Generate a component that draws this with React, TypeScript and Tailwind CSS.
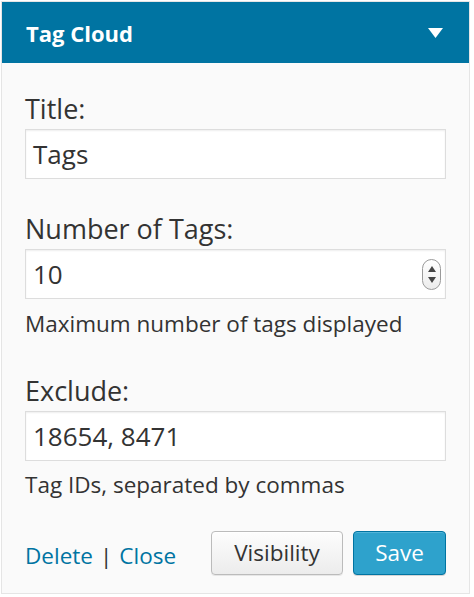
import React from "react";

const font = { fontFamily: '"Open Sans", "Noto Sans", Arial, sans-serif' };

function Field({
  label,
  value,
  spinner,
  className,
}: {
  label: string;
  value: string;
  spinner?: boolean;
  className?: string;
}) {
  return (
    <div className={className}>
      <label className="block text-[27px] leading-[36px] text-[#333]">{label}</label>
      <div className="mt-[2px] flex h-[50px] items-center border border-[#dddddd] bg-white pl-[7px] pr-[4px] shadow-[inset_0_1px_2px_rgba(0,0,0,0.07)]">
        <span className="flex-1 text-[26px] leading-[36px] text-[#333]">{value}</span>
        {spinner && <Spinner />}
      </div>
    </div>
  );
}

function Spinner() {
  return (
    <div className="flex h-[31px] w-[19px] flex-col items-center justify-center gap-[5px] rounded-full border border-[#9a9a9a] bg-gradient-to-b from-white to-[#ececec]">
      <svg width="8" height="6" viewBox="0 0 8 6">
        <path d="M4 0 L8 6 L0 6 Z" fill="#444" />
      </svg>
      <svg width="8" height="6" viewBox="0 0 8 6">
        <path d="M0 0 L8 0 L4 6 Z" fill="#444" />
      </svg>
    </div>
  );
}

export default function App() {
  return (
    <div className="min-h-[597px] bg-white" style={font}>
      <div className="ml-[1px] mt-[1px] w-[469px] border border-[#e5e5e5] bg-[#fafafa]">
        <div className="flex h-[61px] items-center justify-between bg-[#0074a2] pl-[24px] pr-[26px]">
          <h3 className="text-[22px] font-bold leading-[30px] text-white">Tag Cloud</h3>
          <svg width="15" height="10" viewBox="0 0 15 10">
            <path d="M0 0 L15 0 L7.5 10 Z" fill="#fff" />
          </svg>
        </div>
        <div className="px-[23px] pb-[18px] pt-[28px]">
          <Field label="Title:" value="Tags" />
          <Field className="mt-[32px]" label="Number of Tags:" value="10" spinner />
          <p className="mt-[10px] text-[22.5px] leading-[30px] text-[#333]">
            Maximum number of tags displayed
          </p>
          <Field className="mt-[34px]" label="Exclude:" value="18654, 8471" />
          <p className="mt-[9px] text-[22.5px] leading-[30px] text-[#333]">
            Tag IDs, separated by commas
          </p>
          <div className="mt-[31px] flex items-end">
            <div className="mb-[4px] flex-1 text-[22.5px] leading-[30px]">
              <a className="text-[#0074a2]" href="#">Delete</a>
              <span className="mx-[7px] text-[#333]">|</span>
              <a className="text-[#0074a2]" href="#">Close</a>
            </div>
            <button className="h-[44px] w-[132px] rounded-[4px] border border-[#bbbbbb] bg-gradient-to-b from-[#fdfdfd] to-[#ececec] text-[22.5px] leading-[30px] text-[#333] shadow-[inset_0_1px_0_#fff,0_1px_0_rgba(0,0,0,0.08)]">
              Visibility
            </button>
            <button className="ml-[10px] h-[44px] w-[93px] rounded-[4px] border border-[#0074a2] bg-[#2ea2cc] text-[22.5px] leading-[30px] text-white shadow-[inset_0_1px_0_rgba(120,200,230,0.5),0_1px_0_rgba(0,0,0,0.15)]">
              Save
            </button>
          </div>
        </div>
      </div>
    </div>
  );
}
